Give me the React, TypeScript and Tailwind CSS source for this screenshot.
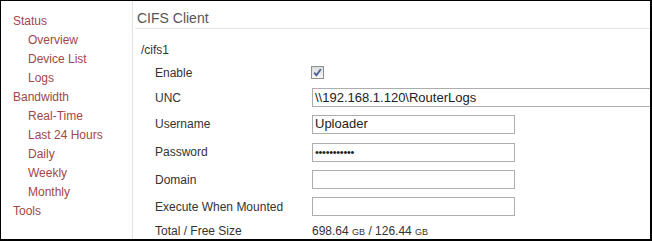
import React from "react";

const NAV = [
  { label: "Status", sub: ["Overview", "Device List", "Logs"] },
  { label: "Bandwidth", sub: ["Real-Time", "Last 24 Hours", "Daily", "Weekly", "Monthly"] },
  { label: "Tools", sub: [] as string[] },
];

function Checkbox() {
  return (
    <span className="ml-[-1px] flex h-[13px] w-[13px] items-center justify-center border border-[#8e8f8f] bg-gradient-to-b from-[#dcdcdc] to-[#f6f6f6]">
      <svg width="9" height="9" viewBox="0 0 9 9">
        <path d="M1.2 4.6 L3.4 7.2 L7.8 1.2" fill="none" stroke="#4a5f97" strokeWidth="1.8" />
      </svg>
    </span>
  );
}

function TextInput({ value, wide, password }: { value?: string; wide?: boolean; password?: boolean }) {
  return (
    <div
      className={`flex h-[19px] shrink-0 items-center overflow-hidden border border-[#adadad] bg-white pl-[2px] text-[13px] text-[#222] ${
        wide ? "w-[360px]" : "w-[203px]"
      }`}
    >
      {password ? (
        <span className="text-[11px] tracking-[-0.3px]">{"•".repeat(value?.length ?? 0)}</span>
      ) : (
        value
      )}
    </div>
  );
}

function Row({ label, h, children }: { label: string; h: string; children: React.ReactNode }) {
  return (
    <div className={`flex items-center ${h}`}>
      <div className="w-[157px] shrink-0 text-[#333]">{label}</div>
      {children}
    </div>
  );
}

export default function App() {
  return (
    <div
      className="flex h-[241px] w-[652px] overflow-hidden border-t border-b-2 border-l border-r-2 border-black bg-white text-[12px]"
      style={{ fontFamily: '"Liberation Sans", Arial, sans-serif' }}
    >
      <nav className="w-[132px] shrink-0 border-r border-[#e2e2e2] pl-[12px] pt-[11px] leading-[19px] text-[#a04848]">
        {NAV.map((g) => (
          <div key={g.label}>
            <div>{g.label}</div>
            {g.sub.map((s) => (
              <div key={s} className="pl-[15px]">
                {s}
              </div>
            ))}
          </div>
        ))}
      </nav>
      <main className="min-w-0 flex-1">
        <div className="ml-[2px] h-[28px] border-b border-[#e6e6e6] pl-[2px] pt-[9px] text-[14px] leading-[16px] text-[#555]">
          CIFS Client
        </div>
        <div className="pl-[8px] pt-[11px]">
          <div className="flex h-[20px] items-center text-[#333]">/cifs1</div>
          <div className="pl-[14px]">
            <Row label="Enable" h="h-[25px]">
              <Checkbox />
            </Row>
            <Row label="UNC" h="h-[25px]">
              <TextInput value={"\\\\192.168.1.120\\RouterLogs"} wide />
            </Row>
            <Row label="Username" h="h-[28px]">
              <TextInput value="Uploader" />
            </Row>
            <Row label="Password" h="h-[28px]">
              <TextInput value="xxxxxxxxxxx" password />
            </Row>
            <Row label="Domain" h="h-[27px]">
              <TextInput />
            </Row>
            <Row label="Execute When Mounted" h="h-[27px]">
              <TextInput />
            </Row>
            <Row label="Total / Free Size" h="h-[22px]">
              <span className="text-[#333]">
                698.64 <span className="text-[9px]">GB</span> / 126.44 <span className="text-[9px]">GB</span>
              </span>
            </Row>
          </div>
        </div>
      </main>
    </div>
  );
}
